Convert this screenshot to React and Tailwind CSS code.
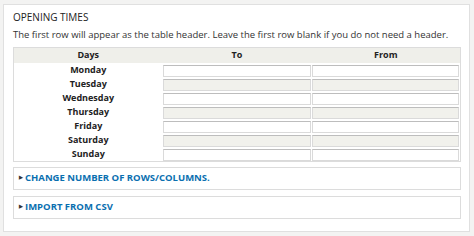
import React from "react";

const days = ["Monday", "Tuesday", "Wednesday", "Thursday", "Friday", "Saturday", "Sunday"];

function Details({ label }) {
  return (
    <div className="border border-[#dcdcdc] h-[23px] flex items-center pl-[5px] text-[#0a6fb0] font-bold text-[9.5px]">
      <span className="text-[5px] mr-[2px] text-[#333]">▶</span>
      {label}
    </div>
  );
}

function Cell({ shaded }) {
  return (
    <div className={`h-[12px] mt-[2px] border border-[#dadada] border-t-[#bdbdbd] ${shaded ? "bg-[#f1f1ec]" : "bg-white"}`} />
  );
}

export default function App() {
  return (
    <div className="w-[474px] h-[236px] bg-[#f3f3f2] pt-[4px] pl-[3px]" style={{ fontFamily: '"Open Sans", "Noto Sans", sans-serif' }}>
      <div className="w-[467px] h-[228px] bg-white border border-[#e0e0e0] pl-[9px] pt-[5px]">
        <div className="text-[10px] text-[#222] leading-[14px]">OPENING TIMES</div>
        <div className="text-[9.5px] text-[#333] mt-[5px] leading-[12px] whitespace-nowrap">
          The first row will appear as the table header. Leave the first row blank if you do not need a header.
        </div>
        <table className="mt-[6px] w-[448px] border-collapse text-[9px] text-[#222] border border-[#dcdcdc] table-fixed">
          <thead>
            <tr className="bg-[#efefea] h-[15px]">
              <th className="w-[149px] font-bold p-0 leading-[14px]">Days</th>
              <th className="w-[149px] font-bold p-0 leading-[14px]">To</th>
              <th className="font-bold p-0 leading-[14px]">From</th>
            </tr>
          </thead>
          <tbody>
            {days.map((d, i) => (
              <tr key={d} className="h-[14px]">
                <td className="text-center font-bold leading-[14px] p-0">{d}</td>
                <td className="p-0 pr-[1px] align-top">
                  <Cell shaded={i % 2 === 1} />
                </td>
                <td className="p-0 pr-[1px] align-top">
                  <Cell shaded={i % 2 === 1} />
                </td>
              </tr>
            ))}
          </tbody>
        </table>
        <div className="mt-[5px] w-[448px] flex flex-col gap-[6px]">
          <Details label="CHANGE NUMBER OF ROWS/COLUMNS." />
          <Details label="IMPORT FROM CSV" />
        </div>
      </div>
    </div>
  );
}
